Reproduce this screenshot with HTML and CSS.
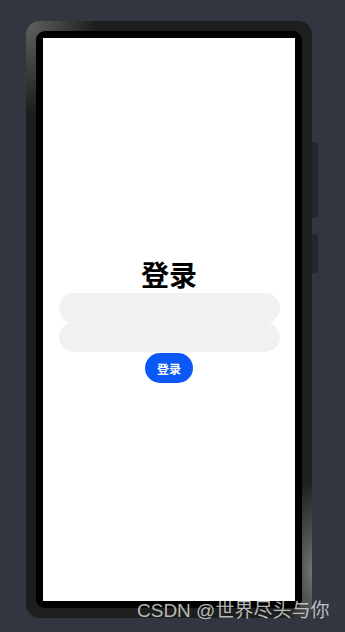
FILE: index.html
```
<!DOCTYPE html>
<html lang="zh">
<head>
<meta charset="utf-8">
<link rel="stylesheet" href="styles.css">
</head>
<body>
<div class="phone">
  <div class="bezel">
    <div class="screen">
      <div class="login">
        <h1 class="title">登录</h1>
        <div class="field"></div>
        <div class="field"></div>
        <button class="btn">登录</button>
      </div>
    </div>
  </div>
  <span class="side side-a"></span>
  <span class="side side-b"></span>
</div>
<div class="mark">CSDN @世界尽头与你</div>
</body>
</html>
```
FILE: styles.css
```
html, body {
  margin: 0;
  padding: 0;
}
body {
  background: #323640;
  width: 345px;
  height: 632px;
  overflow: hidden;
  position: relative;
  font-family: "Noto Sans CJK SC", "Noto Sans", sans-serif;
}
.phone {
  position: relative;
  margin: 21px 0 0 26px;
  width: 286px;
  height: 597px;
  box-sizing: border-box;
  padding: 10px;
  border-radius: 14px;
  background:
    radial-gradient(ellipse 70px 90px at 0 0, rgba(120,122,118,0.75), rgba(120,122,118,0) 100%),
    radial-gradient(ellipse 30px 90px at 100% 92%, rgba(150,152,148,0.7), rgba(150,152,148,0) 100%),
    #1d1f1e;
}
.bezel {
  width: 100%;
  height: 100%;
  box-sizing: border-box;
  padding: 7px;
  background: #000;
  border-radius: 9px;
}
.screen {
  width: 100%;
  height: 100%;
  background: #fff;
  display: flex;
  align-items: center;
  justify-content: center;
}
.login {
  width: 100%;
  display: flex;
  flex-direction: column;
  align-items: center;
}
.title {
  margin: 0;
  height: 37px;
  line-height: 37px;
  font-size: 28px;
  font-weight: 700;
  color: #000;
}
.field {
  width: 221px;
  height: 30px;
  border-radius: 15px;
  background: #f1f1f1;
}
.field + .field {
  margin-top: -1px;
}
.btn {
  margin-top: 1px;
  width: 48px;
  height: 30px;
  border: 0;
  padding: 0;
  border-radius: 15px;
  background: #0a59f7;
  color: #fff;
  font-family: "Noto Sans CJK SC", sans-serif;
  font-size: 12px;
  font-weight: 700;
}
.side {
  position: absolute;
  right: -6px;
  width: 6px;
  background: #25272b;
  border-radius: 0 3px 3px 0;
}
.side-a {
  top: 121px;
  height: 76px;
}
.side-b {
  top: 213px;
  height: 39px;
}
.mark {
  position: absolute;
  left: 137px;
  top: 599px;
  font-family: "Liberation Sans", "Noto Sans CJK SC", sans-serif;
  font-size: 19px;
  line-height: 24px;
  color: rgba(215,215,215,0.85);
  white-space: nowrap;
}
```
